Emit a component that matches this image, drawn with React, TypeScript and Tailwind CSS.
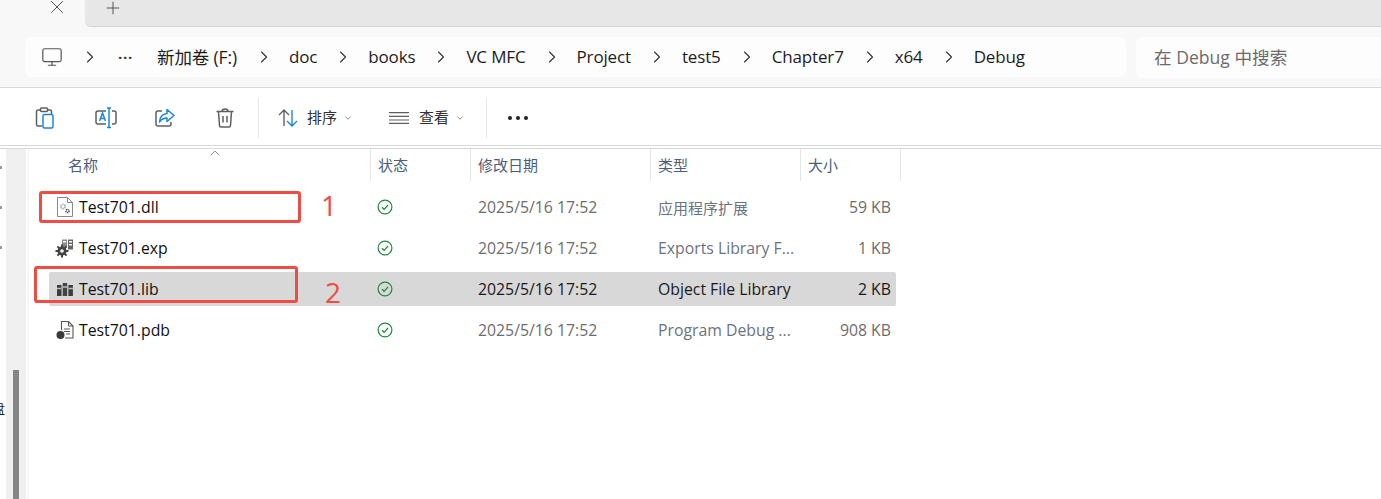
import { Monitor, ChevronRight, X, Plus, ChevronDown, ChevronUp } from "lucide-react";

const FONT = "font-['Open_Sans','Noto_Sans_CJK_SC',sans-serif]";

const crumbs = ["doc", "books", "VC MFC", "Project", "test5", "Chapter7", "x64", "Debug"];

const files = [
  { name: "Test701.dll", type: "应用程序扩展", typeSize: "text-[15px]", size: "59 KB", icon: "dll" },
  { name: "Test701.exp", type: "Exports Library F...", typeSize: "", size: "1 KB", icon: "exp" },
  { name: "Test701.lib", type: "Object File Library", typeSize: "", size: "2 KB", icon: "lib", selected: true },
  { name: "Test701.pdb", type: "Program Debug ...", typeSize: "", size: "908 KB", icon: "pdb" },
];

function Sep() {
  return <ChevronRight className="h-[20px] w-[20px] shrink-0 text-[#333]" strokeWidth={1.3} />;
}

function PasteIcon() {
  return (
    <svg width="20" height="22" viewBox="0 0 20 22" fill="none" strokeWidth="1.5">
      <path d="M5 3H3a1.5 1.5 0 0 0-1.500 1.500v13A1.500 1.500 0 0 0 3 19h4" stroke="#5f5f5f" />
      <path d="M13 3h2a1.500 1.500 0 0 1 1.500 1.500V7" stroke="#5f5f5f" />
      <rect x="5.500" y="1" width="7" height="3.500" rx="1" stroke="#5f5f5f" />
      <rect x="8" y="7.500" width="10" height="13.500" rx="1.500" stroke="#1a86d9" />
    </svg>
  );
}

function RenameIcon() {
  return (
    <svg width="22" height="22" viewBox="0 0 22 22" fill="none" strokeWidth="1.5">
      <path d="M11 4H3a2 2 0 0 0-2 2v9a2 2 0 0 0 2 2h8M17 4h2a2 2 0 0 1 2 2v9a2 2 0 0 1-2 2h-2" stroke="#5f5f5f" />
      <path d="M12 1h4M14 1v19.500M12 20.500h4" stroke="#1a86d9" />
      <path d="M4.500 14l3-8 3 8M5.600 11.500h3.800" stroke="#1a86d9" />
    </svg>
  );
}

function ShareIcon() {
  return (
    <svg width="20" height="20" viewBox="0 0 20 20" fill="none" strokeWidth="1.5">
      <path d="M7 3H3a2 2 0 0 0-2 2v11a2 2 0 0 0 2 2h11a2 2 0 0 0 2-2v-2" stroke="#5f5f5f" />
      <path d="M12 1.500L19 7.500l-7 6V10c-3.500 0-5.500 1.200-7.500 4 .3-5 3-8 7.500-8.500z" stroke="#1a86d9" strokeLinejoin="round" />
    </svg>
  );
}

function TrashIcon() {
  return (
    <svg width="18" height="20" viewBox="0 0 18 20" fill="none" stroke="#5f5f5f" strokeWidth="1.5">
      <path d="M0.500 3.500h17M6 3.500c0-3.500 6-3.500 6 0M2.500 3.500l1 14a1.500 1.500 0 0 0 1.500 1.500h8a1.500 1.500 0 0 0 1.500-1.500l1-14M7 8v6.500M11 8v6.500" />
    </svg>
  );
}

function SortIcon() {
  return (
    <svg width="20" height="18" viewBox="0 0 20 18" fill="none" strokeWidth="1.400">
      <path d="M6 17V1M1 6l5-5 5 5" stroke="#5f5f5f" />
      <path d="M14 1v16M9 12l5 5 5-5" stroke="#1a86d9" />
    </svg>
  );
}

function ViewIcon() {
  return (
    <svg width="20" height="12" viewBox="0 0 20 12" stroke="#5f5f5f" strokeWidth="1.200">
      <path d="M0 .6h20M0 4.400h20M0 8h20M0 11.400h20" />
    </svg>
  );
}

function StatusIcon() {
  return (
    <svg width="16" height="16" viewBox="0 0 16 16" fill="none" stroke="#1c8a3c">
      <circle cx="8" cy="8" r="6.900" strokeWidth="1.200" />
      <path d="M5 8.300l2.100 2L11 6" strokeWidth="1.200" />
    </svg>
  );
}

function FileIcon({ kind }: { kind: string }) {
  if (kind === "dll") {
    return (
      <svg width="16" height="20" viewBox="0 0 16 20" fill="none">
        <path d="M.5.500h10l5 5v14H.5z" fill="#fff" stroke="#8a8a8a" />
        <path d="M10.500.500v5h5" stroke="#8a8a8a" />
        <circle cx="6" cy="9.500" r="2.200" stroke="#aab4bd" strokeWidth="1.800" strokeDasharray="1.500 .6" />
        <circle cx="10.500" cy="14" r="1.600" stroke="#555" strokeWidth="1.500" strokeDasharray="1.200 .5" />
      </svg>
    );
  }
  if (kind === "exp") {
    return (
      <svg width="19" height="19" viewBox="0 0 19 19" fill="none">
        <rect x="7" y="0.500" width="5" height="8" fill="#8a8a8a" />
        <rect x="13" y="0.500" width="5" height="10" fill="#666" />
        <rect x="8" y="2" width="3" height="1.500" fill="#fff" />
        <rect x="14" y="2" width="3" height="1.500" fill="#fff" />
        <rect x="14" y="5" width="3" height="1.500" fill="#fff" />
        <circle cx="7" cy="12" r="4.600" fill="#444" />
        <path d="M7 5.500v13M.5 12h13M2.400 7.400l9.200 9.200M11.600 7.400l-9.200 9.200" stroke="#444" strokeWidth="2" />
        <circle cx="7" cy="12" r="1.800" fill="#fff" />
      </svg>
    );
  }
  if (kind === "lib") {
    return (
      <svg width="16" height="14" viewBox="0 0 16 14">
        <rect x="0" y="3" width="4.500" height="11" fill="#3d3d3d" />
        <rect x="5.700" y="1" width="4.500" height="13" fill="#454545" />
        <rect x="11.400" y="3" width="4.500" height="11" fill="#3d3d3d" />
        <path d="M0 6.500h4.500M5.700 5h4.500M11.400 6.500h4.500" stroke="#bbb" strokeWidth="1.500" />
      </svg>
    );
  }
  return (
    <svg width="18" height="19" viewBox="0 0 18 19" fill="none">
      <path d="M5.500 9V.500h7l4.500 4.500v12H9" fill="#fff" stroke="#555" strokeWidth="1.100" />
      <path d="M12.500.500V5H17" stroke="#555" />
      <path d="M8 8h6M8 10.500h6M10 13h4" stroke="#555" strokeWidth="1.100" />
      <circle cx="4.500" cy="14" r="4" fill="#3a3a3a" />
    </svg>
  );
}

function Callout({ className, label, labelClass }: { className: string; label: string; labelClass: string }) {
  return (
    <>
      <div className={`absolute rounded-[3px] border-[3px] border-[#f04c43] ${className}`} />
      <span className={`absolute text-[28px] leading-none text-[#f04c43] ${labelClass}`}>{label}</span>
    </>
  );
}

export default function App() {
  return (
    <div className={`relative h-[499px] w-[1381px] overflow-hidden bg-white ${FONT}`}>
      {/* Tabs */}
      <div className="flex h-[27px] bg-[#f8f8f8]">
        <div className="flex w-[85px] justify-end pr-[17px]">
          <X className="mt-[-4px] h-[22px] w-[22px] text-[#444]" strokeWidth={1} />
        </div>
        <div className="flex flex-1 rounded-bl-[6px] border-b border-[#d6d6d6] bg-[#e7e7e7] pl-[18px]">
          <Plus className="mt-[-2px] h-[20px] w-[20px] text-[#555]" strokeWidth={1.2} />
        </div>
      </div>

      {/* Address bar */}
      <div className="flex h-[61px] gap-[10px] border-b border-[#d8d8d8] bg-[#f8f8f8] pt-[10px] pl-[25px]">
        <div className="flex h-[40px] w-[1101px] items-center rounded-[6px] bg-[#fdfdfd] pl-[16px] text-[17px] tracking-[-0.15px] text-[#1c1c1c]">
          <Monitor className="mr-[17px] h-[22px] w-[22px] text-[#555]" strokeWidth={1.3} />
          <Sep />
          <span className="mr-[24px] ml-[18px] text-[15px] font-bold tracking-wider text-[#333]">···</span>
          <span className="mr-[17px] text-[17.500px]">新加卷 (F:)</span>
          {crumbs.map((c) => (
            <div key={c} className="flex items-center">
              <Sep />
              <span className="mr-[16px] ml-[15px]">{c}</span>
            </div>
          ))}
        </div>
        <div className="flex h-[41px] flex-1 items-center rounded-l-[6px] bg-[#fdfdfd] pl-[18px] text-[17.600px] text-[#6b6b6b]">
          在 Debug 中搜索
        </div>
      </div>

      {/* Toolbar */}
      <div className="flex h-[58px] items-center border-b border-[#d8d8d8] pt-[2px] pl-[35px] text-[15px] text-[#333]">
        <PasteIcon />
        <div className="ml-[40px]"><RenameIcon /></div>
        <div className="ml-[38px]"><ShareIcon /></div>
        <div className="ml-[41px]"><TrashIcon /></div>
        <div className="mr-[19px] ml-[24px] h-[40px] w-px bg-[#e6e6e6]" />
        <SortIcon />
        <span className="ml-[9px]">排序</span>
        <ChevronDown className="ml-[6px] h-[10px] w-[10px] text-[#777]" />
        <div className="ml-[36px]"><ViewIcon /></div>
        <span className="ml-[10px]">查看</span>
        <ChevronDown className="ml-[6px] h-[10px] w-[10px] text-[#777]" />
        <div className="ml-[21px] h-[40px] w-px bg-[#e6e6e6]" />
        <span className="ml-[21px] flex gap-[4px]">
          <i className="h-[4px] w-[4px] rounded-full bg-[#222]" />
          <i className="h-[4px] w-[4px] rounded-full bg-[#222]" />
          <i className="h-[4px] w-[4px] rounded-full bg-[#222]" />
        </span>
      </div>

      {/* Main */}
      <div className="mt-[2px] flex h-[351px] border-t border-[#d8d8d8]">
        {/* clipped navigation pane */}
        <div className="flex w-[6px] flex-col overflow-hidden">
          <div className="mt-[17px] h-[3px] w-[2px] bg-[#999]" />
          <div className="mt-[37px] h-[3px] w-[2px] bg-[#999]" />
          <div className="mt-[37px] h-[3px] w-[2px] bg-[#999]" />
          <span className="mt-[150px] ml-[-8px] text-[13px] whitespace-nowrap text-[#222]">盘</span>
        </div>
        <div className="flex w-[20px] flex-col justify-end bg-[#f0f0f0] pl-[7px]">
          <div className="h-[129px] w-[6px] bg-[#868686]" />
        </div>
        <div className="ml-[2px] w-px bg-[#f0f0f0]" />
        <div className="flex-1">
          <div className="grid h-[32px] grid-cols-[342px_100px_180px_150px_100px] text-[15px] text-[#4c607a]">
            <div className="relative border-r border-[#e5e5e5] pt-[5px] pl-[39px]">
              名称
              <ChevronUp className="absolute top-[-4px] left-[178px] h-[16px] w-[16px] text-[#777]" strokeWidth={1.2} />
            </div>
            <div className="border-r border-[#e5e5e5] pt-[5px] pl-[7px]">状态</div>
            <div className="border-r border-[#e5e5e5] pt-[5px] pl-[7px]">修改日期</div>
            <div className="border-r border-[#e5e5e5] pt-[5px] pl-[7px]">类型</div>
            <div className="border-r border-[#e5e5e5] pt-[5px] pl-[7px]">大小</div>
          </div>
          <div className="mt-[9px] ml-[20px] flex w-[847px] flex-col gap-[7px] text-[15.800px]">
            {files.map((f) => (
              <div
                key={f.name}
                className={`grid h-[34px] grid-cols-[322px_100px_180px_150px_95px] items-center rounded-[2px] ${f.selected ? "bg-[#d8d8d8]" : ""}`}
              >
                <div className="flex items-center">
                  <div className="flex w-[30px] justify-center pl-[1px]"><FileIcon kind={f.icon} /></div>
                  <span className="pt-[2px] text-[#111]">{f.name}</span>
                </div>
                <div className="flex pl-[6px]"><StatusIcon /></div>
                <div className={`pt-[2px] pl-[7px] ${f.selected ? "text-[#1a1a1a]" : "text-[#6d6d6d]"}`}>2025/5/16 17:52</div>
                <div className={`truncate pt-[2px] pl-[7px] ${f.typeSize} ${f.selected ? "text-[#1a1a1a]" : "text-[#6b7280]"}`}>{f.type}</div>
                <div className={`pt-[2px] pr-[5px] text-right ${f.selected ? "text-[#1a1a1a]" : "text-[#6d6d6d]"}`}>{f.size}</div>
              </div>
            ))}
          </div>
        </div>
      </div>

      {/* Hand-drawn annotations */}
      <Callout className="top-[191px] left-[39px] h-[32px] w-[262px]" label="1" labelClass="top-[191px] left-[321px]" />
      <Callout className="top-[266px] left-[34px] h-[37px] w-[264px]" label="2" labelClass="top-[278px] left-[325px]" />
    </div>
  );
}
